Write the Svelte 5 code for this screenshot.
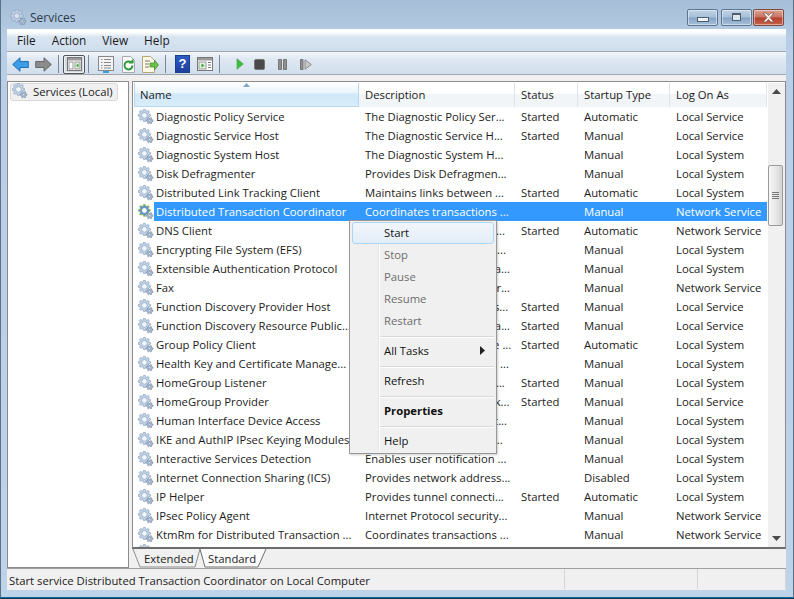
<script>
  function gear(cx, cy, ro, ri, n) {
    const pts = [];
    const step = Math.PI / n;
    for (let i = 0; i < n * 2; i++) {
      const r = i % 2 ? ri : ro;
      const a1 = i * step - step * 0.32;
      const a2 = i * step + step * 0.32;
      pts.push(`${(cx + r * Math.cos(a1)).toFixed(2)},${(cy + r * Math.sin(a1)).toFixed(2)}`);
      pts.push(`${(cx + r * Math.cos(a2)).toFixed(2)},${(cy + r * Math.sin(a2)).toFixed(2)}`);
    }
    return pts.join(' ');
  }
  const big = gear(6.8, 6.8, 6.6, 5, 8);
  const small = gear(12.4, 12.4, 3.6, 2.6, 6);

  const rows = [
    ['Diagnostic Policy Service', 'The Diagnostic Policy Ser...', 'Started', 'Automatic', 'Local Service'],
    ['Diagnostic Service Host', 'The Diagnostic Service H...', 'Started', 'Manual', 'Local Service'],
    ['Diagnostic System Host', 'The Diagnostic System H...', '', 'Manual', 'Local System'],
    ['Disk Defragmenter', 'Provides Disk Defragmen...', '', 'Manual', 'Local System'],
    ['Distributed Link Tracking Client', 'Maintains links between ...', 'Started', 'Automatic', 'Local System'],
    ['Distributed Transaction Coordinator', 'Coordinates transactions ...', '', 'Manual', 'Network Service'],
    ['DNS Client', 'The DNS Client service (d...', 'Started', 'Automatic', 'Network Service'],
    ['Encrypting File System (EFS)', 'Provides the core file enc...', '', 'Manual', 'Local System'],
    ['Extensible Authentication Protocol', 'The Extensible Authentica...', '', 'Manual', 'Local System'],
    ['Fax', 'Enables you to send and r...', '', 'Manual', 'Network Service'],
    ['Function Discovery Provider Host', 'The FDPHOST service hos...', 'Started', 'Manual', 'Local Service'],
    ['Function Discovery Resource Public...', 'Publishes this computer a...', 'Started', 'Manual', 'Local Service'],
    ['Group Policy Client', 'The service is responsible ...', 'Started', 'Automatic', 'Local System'],
    ['Health Key and Certificate Manage...', 'Provides X.509 certificate ...', '', 'Manual', 'Local System'],
    ['HomeGroup Listener', 'Makes local computer ch...', 'Started', 'Manual', 'Local System'],
    ['HomeGroup Provider', 'Performs networking task...', 'Started', 'Manual', 'Local Service'],
    ['Human Interface Device Access', 'Enables generic input acc...', '', 'Manual', 'Local System'],
    ['IKE and AuthIP IPsec Keying Modules', 'The IKEEXT service hosts...', '', 'Manual', 'Local System'],
    ['Interactive Services Detection', 'Enables user notification ...', '', 'Manual', 'Local System'],
    ['Internet Connection Sharing (ICS)', 'Provides network address...', '', 'Disabled', 'Local System'],
    ['IP Helper', 'Provides tunnel connecti...', 'Started', 'Automatic', 'Local System'],
    ['IPsec Policy Agent', 'Internet Protocol security...', '', 'Manual', 'Network Service'],
    ['KtmRm for Distributed Transaction ...', 'Coordinates transactions ...', '', 'Manual', 'Network Service']
  ];
</script>

{#snippet gearIcon(selected)}
  <svg class="gear" class:sel={selected} width="16" height="16" viewBox="0 0 17 17">
    <polygon class="g1" points={big} />
    <circle class="hole" cx="6.8" cy="6.8" r="3" />
    <polygon class="g2" points={small} />
    <circle class="hole2" cx="12.4" cy="12.4" r="1.1" />
  </svg>
{/snippet}

<div class="win">
  <div class="titlebar">
    <svg class="tgear" width="17" height="17" viewBox="0 0 17 17">
      <polygon class="g1" points={big} />
      <circle class="thole" cx="6.8" cy="6.8" r="3" />
      <polygon class="g2" points={small} />
      <circle class="thole" cx="12.4" cy="12.4" r="1.1" />
    </svg>
    <span class="title">Services</span>
    <div class="caps">
      <div class="cap"><span class="min"></span></div>
      <div class="cap"><span class="max"></span></div>
      <div class="cap close">
        <svg width="17" height="11" viewBox="0 0 17 11"><path d="M3 1h3l2.500 2.500L11 1h3l-4 4.500 4 4.500h-3L8.500 7.500 6 10H3l4-4.500z" fill="#f4f0ee" stroke="#7d4a40" stroke-width=".7"/></svg>
      </div>
    </div>
  </div>

  <div class="client">
    <div class="menubar">
      <span>File</span><span>Action</span><span>View</span><span>Help</span>
    </div>
    <div class="toolbar">
      <svg class="ti back" width="17" height="15" viewBox="0 0 17 15"><path d="M.7 7.500 8 .8v3.700h8.300v6H8v3.700z" fill="#3c9ee6" stroke="#1f6fb5"/></svg>
      <svg class="ti fwd" width="17" height="15" viewBox="0 0 17 15"><path d="M16.300 7.500 9 .8v3.700H.7v6H9v3.700z" fill="#8b8b8b" stroke="#666"/></svg>
      <i class="sep s1"></i>
      <div class="tbtn">
        <svg width="15" height="14" viewBox="0 0 15 14"><rect x=".5" y=".5" width="14" height="13" fill="#fff" stroke="#777"/><rect x="1" y="1" width="13" height="2.500" fill="#9a9a9a"/><rect x="2" y="5" width="4" height="7" fill="none" stroke="#999"/><rect x="8" y="5" width="5" height="7" fill="#e5f2df" stroke="#999"/><path d="M11.500 6.500v4L9 8.500z" fill="#2f9e35"/></svg>
      </div>
      <i class="sep s2"></i>
      <svg class="ti i3" width="16" height="17" viewBox="0 0 16 17"><rect x=".5" y=".5" width="15" height="14" fill="#f4f4f4" stroke="#888"/><path d="M3 3.500h1.500M6 3.500h7M3 6.500h1.500M6 6.500h7M3 9.500h1.500M6 9.500h7M3 12h1.500M6 12h7" stroke="#888"/><rect x="5" y="15" width="6" height="2" fill="#3aa0dc"/></svg>
      <svg class="ti i4" width="15" height="17" viewBox="0 0 15 17"><path d="M1.500.5h8l4 4v12h-12z" fill="#fafafa" stroke="#aaa"/><path d="M11.500 9.500a4 4 0 1 1-1.500-3.200" fill="none" stroke="#2e9a3a" stroke-width="2"/><path d="M7.500 7.500h5v-5z" fill="#2e9a3a"/></svg>
      <svg class="ti i5" width="18" height="17" viewBox="0 0 18 17"><path d="M1.500.5h8l4 4v12h-12z" fill="#fdf8e4" stroke="#b5a97c"/><path d="M4 5h5M4 8h4M4 11h4" stroke="#777"/><path d="M9 7h4.500V4l4 5-4 5v-3H9z" fill="#6cc04a" stroke="#3f8f2a" stroke-width=".7"/></svg>
      <i class="sep s3"></i>
      <div class="help">?</div>
      <svg class="ti i7" width="16" height="14" viewBox="0 0 16 14"><rect x=".5" y=".5" width="15" height="13" fill="#fff" stroke="#777"/><rect x="1" y="1" width="14" height="2.500" fill="#9a9a9a"/><rect x="2" y="5" width="7" height="7" fill="#e5f2df" stroke="#999"/><path d="M4.500 6.500v4l3-2z" fill="#2f9e35"/><path d="M11 5.500h3M11 8h3M11 10.500h3" stroke="#777"/></svg>
      <i class="sep s4"></i>
      <svg class="ti play" width="8" height="12" viewBox="0 0 8 12"><path d="M1 .8v10.400L7.300 6z" fill="#35c13c" stroke="#5aa35e" stroke-width=".8"/></svg>
      <svg class="ti stop" width="11" height="11" viewBox="0 0 11 11"><rect x=".5" y=".5" width="10" height="10" rx="1.500" fill="#4a4a4a" stroke="#777"/></svg>
      <svg class="ti pause" width="9" height="11" viewBox="0 0 9 11"><path d="M.5.500h3v10h-3zM5.500.500h3v10h-3z" fill="#8f8f8f" stroke="#777"/></svg>
      <svg class="ti resume" width="12" height="11" viewBox="0 0 12 11"><path d="M.5.500h2.500v10H.5z" fill="#8f8f8f" stroke="#777"/><path d="M5 .8v9.400L11.300 5.500z" fill="#c9c9c9" stroke="#8a8a8a"/></svg>
    </div>

    <div class="panes">
      <div class="left">
        <div class="node">
          {@render gearIcon(false)}
          <span>Services (Local)</span>
        </div>
      </div>

      <div class="right">
        <div class="listwrap">
          <div class="list">
            <div class="head">
              <div class="hc hot"><svg class="sort" width="7" height="4" viewBox="0 0 7 4"><path d="M0 4 3.500 0 7 4z" fill="#7fa3c9"/></svg>Name</div>
              <div class="hc">Description</div>
              <div class="hc">Status</div>
              <div class="hc">Startup Type</div>
              <div class="hc">Log On As</div>
            </div>
            <div class="body">
              {#each rows as r, i}
                <div class="row" class:selected={i === 5}>
                  <div class="c name">
                    {@render gearIcon(i === 5)}
                    <span class="nm">{r[0]}</span>
                  </div>
                  <div class="c">{r[1]}</div>
                  <div class="c">{r[2]}</div>
                  <div class="c">{r[3]}</div>
                  <div class="c">{r[4]}</div>
                </div>
              {/each}
              <svg class="peek" width="16" height="3" viewBox="0 0 17 3"><polygon class="g1" points={big} /></svg>
            </div>
          </div>
          <div class="scroll">
            <div class="sbtn"><svg width="9" height="5" viewBox="0 0 9 5"><path d="M0 5 4.500 0 9 5z" fill="#4a4a4a"/></svg></div>
            <div class="track">
              <div class="thumb"><i></i><i></i><i></i><i></i></div>
            </div>
            <div class="sbtn"><svg width="9" height="5" viewBox="0 0 9 5"><path d="M0 0 4.500 5 9 0z" fill="#4a4a4a"/></svg></div>
          </div>
        </div>
        <div class="tabs">
          <svg class="tabshape" width="140" height="20" viewBox="0 0 140 20">
            <path d="M1 0 8 18H63L68 0" fill="#f0f0f0" stroke="#8c8c8c"/>
            <path d="M68 0 73 18H126L134 0" fill="#fbfbfb" stroke="#6e6e6e"/>
          </svg>
          <span class="tab t1">Extended</span>
          <span class="tab t2">Standard</span>
        </div>
      </div>
    </div>

    <div class="status">
      <div class="st main">Start service Distributed Transaction Coordinator on Local Computer</div>
      <div class="st mid"></div>
      <div class="st last"></div>
    </div>
  </div>

  <div class="menu">
    <div class="gutter"></div>
    <div class="it hl">Start</div>
    <div class="it dis">Stop</div>
    <div class="it dis">Pause</div>
    <div class="it dis">Resume</div>
    <div class="it dis">Restart</div>
    <div class="msep"></div>
    <div class="it tasks">All Tasks<svg width="5" height="9" viewBox="0 0 5 9"><path d="M0 0 5 4.500 0 9z" fill="#222"/></svg></div>
    <div class="msep"></div>
    <div class="it">Refresh</div>
    <div class="msep"></div>
    <div class="it bold">Properties</div>
    <div class="msep"></div>
    <div class="it">Help</div>
  </div>
</div>

<style>
  :global(body) { margin: 0; background: #123a55; }
  .win {
    position: relative;
    width: 794px;
    height: 598px;
    box-sizing: border-box;
    padding: 0 7px 7px 6px;
    display: flex;
    flex-direction: column;
    overflow: hidden;
    background: linear-gradient(#a6bdd7 0, #b7cee6 40px, #bcd3ea 100%);
    border-left: 1px solid #5c7186;
    border-right: 1px solid #5c7186;
    border-bottom: 1px solid #10689a;
    font-family: "Open Sans", "Noto Sans", sans-serif;
    font-size: 11.3px;
    color: #1b1b1b;
  }
  .titlebar {
    height: 29px;
    box-sizing: border-box;
    flex: none;
    display: flex;
    align-items: center;
    padding: 5px 0 0 3px;
  }
  .title { margin-left: 3px; font-size: 12px; color: #2b3a49; }
  .caps { margin-left: auto; display: flex; margin-right: 2px; }
  .cap {
    width: 31px; height: 17px;
    box-sizing: border-box;
    margin-left: 3px;
    border: 1px solid #5d7690;
    border-radius: 2px;
    display: flex; align-items: center; justify-content: center;
    background: linear-gradient(#c0d2e6 0, #a7bfd8 48%, #86a3c2 52%, #a5c0da 100%);
    box-shadow: inset 0 0 0 1px rgba(255,255,255,.45);
  }
  .cap.close {
    margin-left: 1px;
    border-color: #7d4a40;
    background: linear-gradient(#dba391 0, #c9725f 48%, #b33f2d 52%, #c8624d 100%);
  }
  .min { width: 10px; height: 3px; background: #f0f4f8; border: 1px solid #4d5f73; margin-top: 4px; box-sizing: content-box; }
  .max { width: 7px; height: 5px; background: #dde6ef; border: 1px solid #4d5f73; border-top-width: 2px; box-sizing: content-box; }

  .client { flex: 1; min-height: 0; display: flex; flex-direction: column; background: #f0f0f0; }
  .menubar {
    height: 23px;
    box-sizing: border-box;
    flex: none;
    display: flex;
    align-items: center;
    padding-left: 10px;
    gap: 16px;
    font-size: 11.8px;
    background: linear-gradient(#fdfefe 0, #fff 3px, #d8e4f0 8px, #cfdded 100%);
    border-bottom: 1px solid #a0a6ad;
  }
  .toolbar {
    height: 23px;
    flex: none;
    box-sizing: border-box;
    position: relative;
    display: flex;
    align-items: center;
    padding-top: 2px;
    background: linear-gradient(#f3f7fb 0, #e0e9f3 30%, #d1deec 100%);
    border-bottom: 1px solid #a0a6ad;
  }
  .ti { display: block; flex: none; }
  .back { margin-left: 5px; }
  .fwd { margin-left: 6px; }
  .sep { display: block; width: 1px; height: 18px; flex: none; background: #7d8893; }
  .s1 { margin-left: 6px; }
  .tbtn {
    margin-left: 4px;
    width: 22px; height: 19px;
    flex: none;
    box-sizing: border-box;
    border: 1px solid #50555b;
    border-radius: 2px;
    background: #d4dae2;
    box-shadow: inset 0 0 0 1px #eef2f6;
    display: flex; align-items: center; justify-content: center;
  }
  .s2 { margin-left: 3px; }
  .i3 { margin-left: 9px; }
  .i4 { margin-left: 7px; }
  .i5 { margin-left: 5px; }
  .s3 { margin-left: 6px; }
  .help {
    margin-left: 9px;
    width: 13px; height: 16px;
    flex: none;
    border: 1px solid #1a3f8c;
    background: linear-gradient(#2c5cc0, #1f3f9c);
    color: #fff;
    font: bold 13px/16px "Liberation Sans", sans-serif;
    text-align: center;
  }
  .i7 { margin-left: 7px; }
  .s4 { margin-left: 6px; }
  .play { margin-left: 16px; }
  .stop { margin-left: 10px; }
  .pause { margin-left: 13px; }
  .resume { margin-left: 13px; }

  .panes {
    flex: 1;
    min-height: 0;
    display: flex;
    padding-top: 6px;
  }
  .left {
    width: 122px;
    flex: none;
    box-sizing: border-box;
    background: #fff;
    border: 1px solid #8b8b8b;
    padding: 1px 0 0 2px;
  }
  .node {
    width: 108px;
    height: 18px;
    box-sizing: border-box;
    display: flex;
    align-items: center;
    gap: 5px;
    padding-bottom: 2px;
    background: #f0f0f0;
    border: 1px solid #d9d9d9;
    border-radius: 3px;
    white-space: nowrap;
    color: #222;
  }
  .node .gear { margin-left: 1px; }
  .right {
    flex: 1;
    min-width: 0;
    margin-left: 3px;
    display: flex;
    flex-direction: column;
  }
  .listwrap {
    height: 468px;
    flex: none;
    box-sizing: border-box;
    display: flex;
    background: #fff;
    border: 1px solid #8b8b8b;
    border-bottom: 2px solid #6d6d6d;
    padding: 1px 0 0 1px;
    overflow: hidden;
  }
  .list { flex: 1; min-width: 0; overflow: hidden; }
  .head {
    display: grid;
    grid-template-columns: 225px 156px 63px 92px 97px;
    height: 24px;
  }
  .hc {
    position: relative;
    box-sizing: border-box;
    padding: 3px 0 0 6px;
    line-height: 17px;
    background: linear-gradient(#fff 0, #fff 45%, #f2f5f8 46%, #f2f5f8 100%);
    border-right: 1px solid #dde3ea;
    white-space: nowrap;
  }
  .hc.hot {
    background: linear-gradient(#fff 0, #e8f4fc 45%, #cfe7f8 46%, #d9edfb 100%);
    border: 1px solid #b9d7ec;
    border-top: 0;
    padding-left: 5px;
  }
  .sort { position: absolute; left: 108px; top: 0; }
  .body { height: 441px; overflow: hidden; }
  .row {
    display: grid;
    grid-template-columns: 225px 156px 63px 92px 97px;
    width: 633px;
    height: 19px;
    line-height: 19px;
  }
  .c { padding-left: 6px; white-space: nowrap; overflow: hidden; }
  .name { padding-left: 4px; display: flex; align-items: center; overflow: hidden; }
  .nm { padding: 0 2px; line-height: 19px; }
  .row.selected { background: linear-gradient(to right, #fff 20px, #3399ff 20px); color: #fff; }
  .gear { flex: none; }
  .peek { display: block; margin-left: 4px; }
  .g1 { fill: #c3d3e6; stroke: #8ea6c4; stroke-width: .8; }
  .g2 { fill: #a8b8cc; stroke: #7d8fa8; stroke-width: .7; }
  .hole, .hole2 { fill: #f2f7fb; stroke: #7f99ba; stroke-width: .7; }
  .thole { fill: #d5e1ee; stroke: #7f99ba; stroke-width: .7; }
  .sel .g1 { fill: #5e93c9; stroke: #b5c92c; stroke-width: 1; stroke-dasharray: 1.500 1; }
  .sel .hole { fill: #fff; stroke: #3f76ad; }

  .scroll {
    width: 17px;
    flex: none;
    display: flex;
    flex-direction: column;
    background: #f0f0f0;
  }
  .sbtn { height: 17px; flex: none; display: flex; align-items: center; justify-content: center; }
  .track { flex: 1; padding-top: 65px; }
  .thumb {
    width: 15px;
    height: 61px;
    box-sizing: border-box;
    border: 1px solid #9b9b9b;
    border-radius: 2px;
    background: linear-gradient(to right, #f5f5f5, #e8e8e8 50%, #d3d3d3);
    display: flex;
    flex-direction: column;
    justify-content: center;
    align-items: center;
    gap: 1px;
  }
  .thumb i { display: block; width: 7px; height: 1px; background: #777; }

  .tabs { flex: 1; min-height: 0; position: relative; background: #f0f0f0; }
  .tabshape { position: absolute; left: 0; top: 0; }
  .tab { position: absolute; top: 1px; line-height: 17px; }
  .t1 { left: 12px; }
  .t2 { left: 76px; }

  .status {
    height: 22px;
    flex: none;
    box-sizing: border-box;
    display: flex;
    background: #f0f0f0;
    border-top: 1px solid #a0a0a0;
    line-height: 23px;
  }
  .st { box-sizing: border-box; border-right: 1px solid #d4d4d4; white-space: nowrap; height: 20px; }
  .main { width: 558px; padding-left: 2px; }
  .mid { width: 133px; }
  .last { flex: 1; }

  .menu {
    position: absolute;
    left: 348px;
    top: 220px;
    width: 148px;
    box-sizing: border-box;
    background: #f0f0f0;
    border: 1px solid #979797;
    padding: 1px 2px;
    font-size: 11.3px;
    color: #111;
    box-shadow: 1px 1px 2px rgba(0,0,0,.2);
  }
  .gutter { position: absolute; left: 28px; top: 2px; bottom: 2px; width: 1px; background: #e2e3e3; box-shadow: 1px 0 0 #fff; }
  .it {
    position: relative;
    height: 22px;
    line-height: 21px;
    box-sizing: border-box;
    padding-left: 32px;
  }
  .it.hl {
    border: 1px solid #a8d8f5;
    border-radius: 3px;
    padding-left: 31px;
    line-height: 19px;
    background: linear-gradient(#f1f6fb, #e3edf7);
  }
  .dis { color: #6d6d6d; }
  .bold { font-weight: 700; }
  .tasks { display: flex; align-items: center; justify-content: space-between; padding-right: 9px; padding-bottom: 1px; }
  .msep { height: 1px; margin: 4px 0 3px 28px; background: #d7d7d7; box-shadow: 0 1px 0 #fff; }
</style>
